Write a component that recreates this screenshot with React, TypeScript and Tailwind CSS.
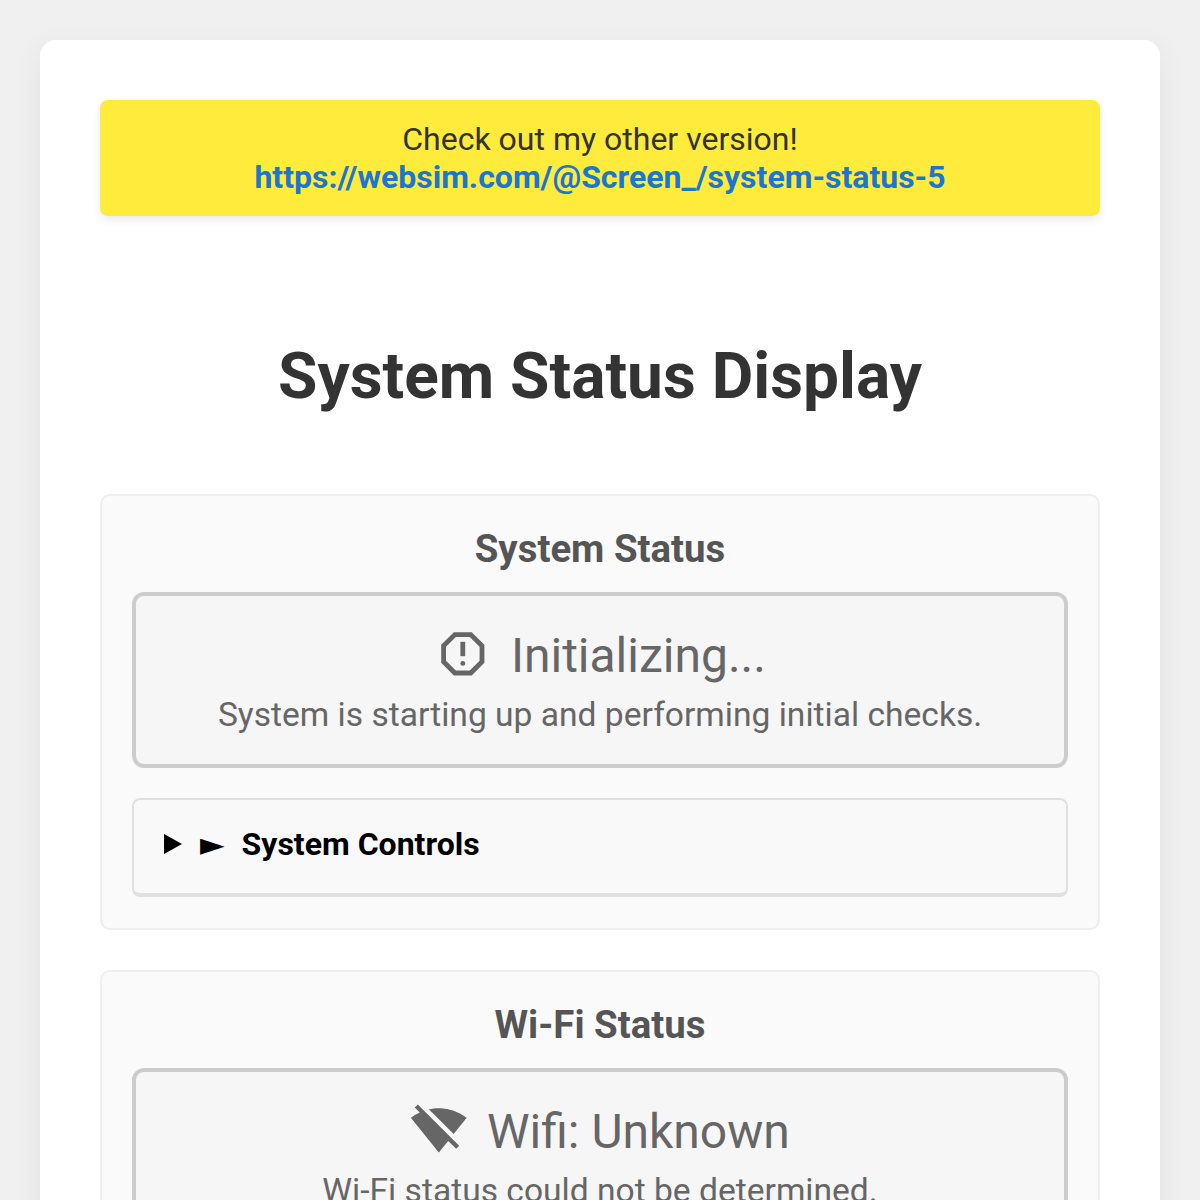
const ReportIcon = () => (
  <svg viewBox="0 0 24 24" className="mb-[5px] w-[57.6px] h-[57.6px] shrink-0 fill-current" aria-hidden="true">
    <path d="M15.73 3H8.27L3 8.27v7.46L8.27 21h7.46L21 15.73V8.27L15.73 3zM19 14.9L14.9 19H9.1L5 14.9V9.1L9.1 5h5.8L19 9.1v5.8z" />
    <path d="M11 7h2v6h-2z" />
    <circle cx="12" cy="16" r="1" />
  </svg>
);

const WifiOffIcon = () => (
  <svg viewBox="0 0 24 24" className="mb-[5px] w-[57.6px] h-[57.6px] shrink-0 fill-current" aria-hidden="true">
    <path d="M23.64 7c-.45-.34-4.93-4-11.64-4-1.5 0-2.89.19-4.15.48L18.18 13.8 23.64 7zm-6.6 8.22L3.27 1.44 2 2.72l2.05 2.06C1.91 5.76.59 6.82.36 7l11.63 14.49.01.01.01-.01 3.9-4.86 3.32 3.32 1.27-1.27-3.46-3.46z" />
  </svg>
);

export default function App() {
  return (
    <div className="min-h-[1200px] h-[1200px] overflow-hidden bg-[#f0f0f0] p-10 font-['Roboto',sans-serif] text-[#333333]">
      <div className="rounded-2xl bg-white px-[60px] pt-[60px] pb-10 shadow-[0_8px_32px_rgba(0,0,0,0.06)]">
        <div className="rounded-lg bg-[#ffeb3b] px-5 py-[20px] text-center text-[32px] leading-[38px] tracking-normal shadow-[0_4px_8px_rgba(0,0,0,0.08)]">
          <div>Check out my other version!</div>
          <a className="font-bold text-[#1976d2]">https://websim.com/@Screen_/system-status-5</a>
        </div>

        <h1 className="mt-[123px] text-center text-[64px] leading-[75px] font-bold text-[#333333]">System Status Display</h1>

        <section className="mt-[80px] rounded-[10px] border-2 border-[#eeeeee] bg-[#fafafa] px-[30px] pt-[30px] pb-[31px]">
          <h2 className="text-center text-[38.4px] leading-[45px] font-bold text-[#555555]">System Status</h2>
          <div className="mt-[21px] rounded-xl border-4 border-[#cccccc] bg-[#f6f6f6] px-5 pt-[30px] pb-[29px] text-center text-[#666666]">
            <div className="flex h-[60px] items-center justify-center gap-[19.2px] text-[48px] leading-[56px]">
              <ReportIcon />
              <span>Initializing...</span>
            </div>
            <p className="mt-[9px] text-[33.6px] leading-[40px]">System is starting up and performing initial checks.</p>
          </div>
          <div className="mt-[30px] flex h-[99px] items-center rounded-lg border-2 border-b-4 border-[#e0e0e0] bg-[#f9f9f9] px-[30px] pb-[6px] text-[32px] font-bold text-black">
            <span className="h-0 w-0 border-y-[10px] border-l-[18px] border-y-transparent border-l-black"></span>
            <span className="ml-[18px] font-['DejaVu_Sans'] font-normal">►</span>
            <span className="ml-[17px]">System Controls</span>
          </div>
        </section>

        <section className="mt-10 rounded-[10px] border-2 border-[#eeeeee] bg-[#fafafa] px-[30px] pt-[30px] pb-[31px]">
          <h2 className="text-center text-[38.4px] leading-[45px] font-bold text-[#555555]">Wi-Fi Status</h2>
          <div className="mt-[21px] rounded-xl border-4 border-[#cccccc] bg-[#f6f6f6] px-5 pt-[30px] pb-[29px] text-center text-[#666666]">
            <div className="flex h-[60px] items-center justify-center gap-[19.2px] text-[48px] leading-[56px]">
              <WifiOffIcon />
              <span>Wifi: Unknown</span>
            </div>
            <p className="mt-[9px] text-[33.6px] leading-[40px]">Wi-Fi status could not be determined.</p>
          </div>
        </section>
      </div>
    </div>
  );
}
